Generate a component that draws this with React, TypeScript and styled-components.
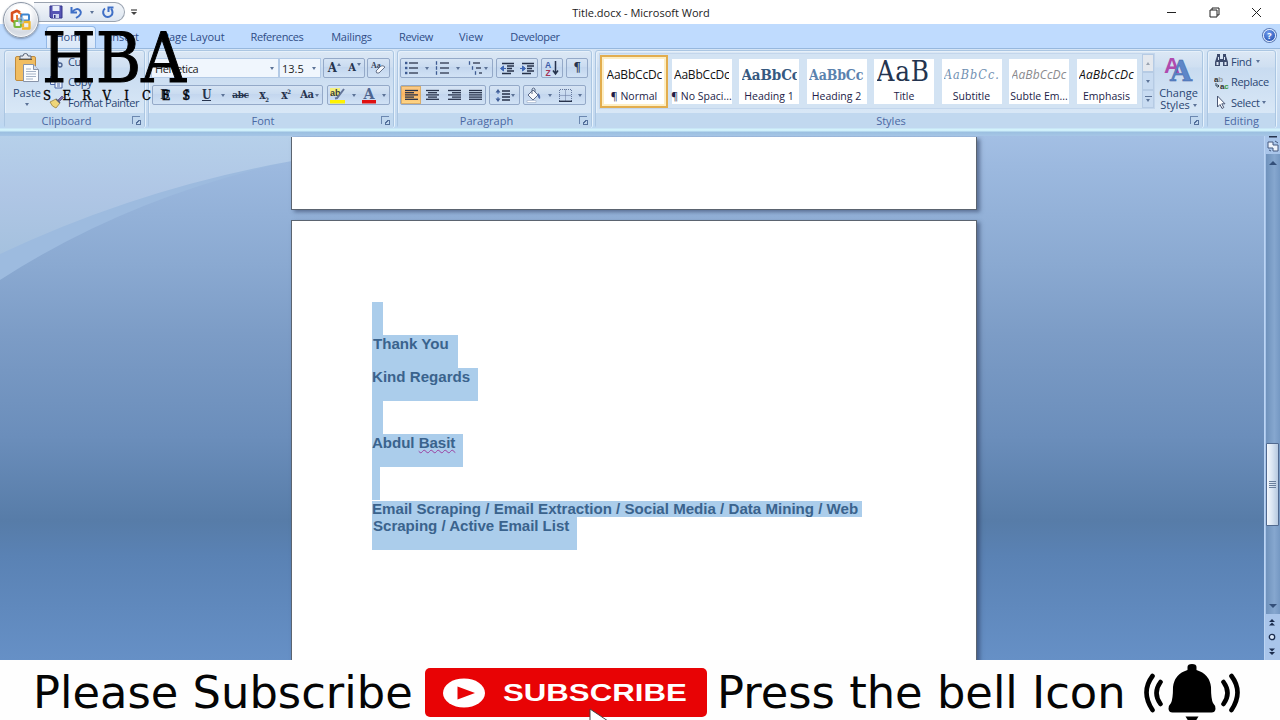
import React from "react";
import styled, { createGlobalStyle, css } from "styled-components";

const Global = createGlobalStyle`
  *{box-sizing:border-box}
  html,body{margin:0;padding:0;background:#fff}
  body{width:1280px;height:720px;overflow:hidden;font-family:"Open Sans","Noto Sans",sans-serif;font-size:11px;color:#2b4673}
  svg{display:block;flex:none}
`;

const Screen = styled.div`position:relative;width:1280px;height:720px;display:flex;flex-direction:column;overflow:hidden;background:#fff;white-space:nowrap;`;

/* ---------- title bar ---------- */
const TitleBar = styled.header`height:24px;display:flex;align-items:center;background:#fff;padding-left:34px;flex:none;`;
const QuickAccess = styled.div`width:91px;height:20px;display:flex;align-items:center;gap:7px;padding-left:15px;border:1px solid #9aa3b0;border-left:0;border-radius:0 10px 10px 0;background:linear-gradient(#f3f6fa,#dce5f0);`;
const QuickMore = styled.div`width:18px;display:flex;justify-content:center;`;
const DocTitle = styled.div`margin-left:428px;width:140px;display:flex;justify-content:center;color:#222;font-size:11px;padding-top:1px;letter-spacing:0;`;
const WindowControls = styled.div`margin-left:455px;display:flex;align-items:center;gap:31.5px;`;
const Orb = styled.div`position:absolute;left:3px;top:2px;width:36px;height:36px;border-radius:50%;border:1px solid #8d97a6;background:radial-gradient(circle at 50% 30%,#fff 0 30%,#d5dae2 65%,#eef1f5 100%);box-shadow:inset 0 0 0 1px #f5f7fa,0 1px 2px rgba(60,80,110,.5);display:flex;align-items:center;justify-content:center;`;

/* ---------- tabs ---------- */
const Tabs = styled.nav`height:24px;display:flex;align-items:center;background:#bfdbfe;padding-left:46px;flex:none;color:#2f4d86;`;
const Tab = styled.div<{ $w: number; $active?: boolean; $ls?: number }>`
  width:${p => p.$w}px;height:24px;display:flex;align-items:center;justify-content:center;padding-top:0;letter-spacing:${p => p.$ls ?? 0}px;
  ${p => p.$active && css`height:22px;align-self:flex-end;padding-bottom:2px;background:linear-gradient(#e8f3fe,#dbe8f8);border:1px solid #93b8e6;border-bottom:0;border-radius:4px 4px 0 0;`}
`;
const Help = styled.div`margin:0 4px 2px auto;width:13px;height:13px;border-radius:50%;background:radial-gradient(circle at 40% 30%,#6f9bee,#1d46a8);border:1px solid #dfeafc;box-shadow:0 0 0 1px #5c7ab4;display:flex;align-items:center;justify-content:center;color:#fff;font-size:9px;font-weight:700;`;

/* ---------- ribbon ---------- */
const Ribbon = styled.section`height:88px;display:flex;gap:3px;padding:1px 3px 6px 4px;flex:none;background:linear-gradient(#d6e5f5 0,#cfe0f3 30%,#c3d8ef 78%,#bdd8f2 79px,#d5f4fb 80px,#cdeefa 82px,#9bbfe0 83px,#a9c8e8 88px);border-top:1px solid #97b8de;`;
const Group = styled.div<{ $w: number; $ml?: number }>`width:${p => p.$w}px;margin-left:${p => p.$ml ?? 0}px;height:78px;display:flex;flex-direction:column;border:1px solid #abc6e2;border-radius:3px;box-shadow:1px 0 0 #e6f2fc,inset 1px 1px 0 #e6f0fa;background:linear-gradient(#dce8f5,#cfdff1 16px,#c8dbf0 17px,#d8e7f6 61px);flex:none;`;
const GroupBody = styled.div`height:62px;display:flex;flex:none;`;
const GroupLabel = styled.div<{ $shift?: number }>`
  flex:1;display:flex;align-items:center;justify-content:center;position:relative;background:#c1d8ef;color:#4a68a3;letter-spacing:0;padding-right:${p => p.$shift ?? 16}px;
`;
const Launcher = styled.span`position:absolute;right:4px;top:3px;width:8px;height:8px;border-left:1px solid #6c88b0;border-top:1px solid #6c88b0;
  &::after{content:"";position:absolute;left:3px;top:3px;width:4px;height:4px;border-right:1.5px solid #55719c;border-bottom:1.5px solid #55719c;background:linear-gradient(135deg,transparent 30%,#55719c 31% 60%,transparent 61%);}
`;
const Caret = styled.i<{ $c?: string; $up?: boolean; $s?: number }>`width:0;height:0;flex:none;border-left:${p => p.$s ?? 2.5}px solid transparent;border-right:${p => p.$s ?? 2.5}px solid transparent;${p => p.$up ? "border-bottom" : "border-top"}:${p => p.$s ?? 3}px solid ${p => p.$c ?? "#5c7397"};`;
const BigButton = styled.div<{ $w: number; $pt?: number; $gap?: number }>`width:${p => p.$w}px;display:flex;flex-direction:column;align-items:center;line-height:12px;padding-top:${p => p.$pt ?? 0}px;gap:${p => p.$gap ?? 0}px;`;
const CaretLine = styled.span`display:flex;align-items:center;gap:3px;`;
const CommandList = styled.div<{ $gap: number; $ls?: number }>`display:flex;flex-direction:column;letter-spacing:${p => p.$ls ?? 0}px;
  &>div{height:20.5px;display:flex;align-items:center;gap:${p => p.$gap}px;}
`;
const Rows = styled.div`display:flex;flex-direction:column;gap:7px;padding:7px 0 0 2px;`;
const Row = styled.div<{ $gap?: number; $pl?: number }>`display:flex;height:20px;gap:${p => p.$gap ?? 3}px;padding-left:${p => p.$pl ?? 0}px;`;
const Combo = styled.div<{ $w: number; $pl?: number; $ls?: number }>`width:${p => p.$w}px;height:20px;background:#f0f6fd;border:1px solid #b3cae6;display:flex;align-items:center;justify-content:space-between;padding:0 4px 0 ${p => p.$pl ?? 3}px;color:#222;letter-spacing:${p => p.$ls ?? 0}px;`;
const ButtonBox = styled.div<{ $w: number }>`width:${p => p.$w}px;height:20px;border:1px solid #94a9c8;border-radius:2px;background:linear-gradient(#d6e4f4,#c9dbf0 45%,#c3d6ee 46%,#d1e2f5);display:flex;align-items:center;color:#26334d;`;
const Cell = styled.div<{ $w: number; $on?: boolean; $top?: boolean }>`width:${p => p.$w}px;height:18px;display:flex;align-items:center;justify-content:center;flex:none;gap:1px;
  ${p => p.$top && css`i{align-self:flex-start;margin-top:4px;}`}
  ${p => p.$on && css`background:linear-gradient(#fbcf8d,#fcb460 45%,#fed98a);box-shadow:inset 0 0 0 1px #d9ad6a;`}
`;
const Glyph = styled.span<{ $size?: number; $italic?: boolean; $u?: boolean; $strike?: boolean }>`font-family:"DejaVu Serif Condensed","DejaVu Serif",serif;font-weight:700;font-size:${p => p.$size ?? 12}px;line-height:14px;font-style:${p => p.$italic ? "italic" : "normal"};text-decoration:${p => p.$u ? "underline" : p.$strike ? "line-through" : "none"};letter-spacing:-.4px;
  sub,sup{font-size:6px;line-height:0;}
`;

/* ---------- style gallery ---------- */
const Gallery = styled.div`margin:2px 0 0 3px;width:556px;height:56px;display:flex;align-items:center;gap:7.5px;padding-left:4px;border:1px solid #c3d6ec;background:#d3e3f3;`;
const StyleTile = styled.div<{ $on?: boolean }>`width:60px;height:45px;background:#fff;display:flex;flex-direction:column;align-items:center;flex:none;color:#221c48;
  ${p => p.$on && css`box-shadow:0 0 0 2px #fdeec4,0 0 0 4px #e2ad4e;`}
`;
const Sample = styled.div<{ $ff?: string; $size?: number; $c?: string; $b?: boolean; $i?: boolean; $ls?: number; $lh?: number }>`
  width:55px;height:29px;line-height:${p => p.$lh ?? 32}px;overflow:hidden;text-align:left;
  font-family:${p => p.$ff ?? '"Open Sans"'},sans-serif;font-size:${p => p.$size ?? 12}px;color:${p => p.$c ?? "#111"};font-weight:${p => p.$b ? 700 : 400};font-style:${p => p.$i ? "italic" : "normal"};letter-spacing:${p => p.$ls ?? 0}px;
`;
const StyleName = styled.div`height:16px;line-height:16px;font-size:10.5px;`;
const GallerySteps = styled.div`width:13px;height:54px;display:flex;flex-direction:column;margin-left:-2px;
  div{flex:1;border:1px solid #b6cbe4;background:#c8dbf1;display:flex;flex-direction:column;gap:2px;align-items:center;justify-content:center;}
  div:first-child{background:#e4e8ee;}
  hr{width:7px;height:1px;border:0;margin:0;background:#5c7397;}
`;

/* ---------- document area ---------- */
const Work = styled.main`height:524px;display:flex;flex:none;`;
const Desk = styled.div`position:relative;width:1264px;height:524px;overflow:hidden;background:linear-gradient(#a3bfe4 0,#9cb9df 30px,#8aa9d1 130px,#7c9cc6 200px,#6b8ebb 300px,#577ca8 385px,#5a82b4 420px,#6690c6 524px);display:flex;flex-direction:column;align-items:center;padding:1px 0 0 4px;gap:10px;`;
const Swoosh = styled.svg`position:absolute;left:0;top:0;`;
const Sheet = styled.article<{ $h: number; $last?: boolean }>`position:relative;width:686px;height:${p => p.$h}px;background:#fff;border:1px solid #5b6470;border-top-width:${p => p.$last ? 1 : 0}px;flex:none;box-shadow:3px 2px 4px rgba(40,55,90,.55);padding:${p => p.$last ? "81px 0 0 80px" : "0"};`;
const Line = styled.p<{ $w: number; $h?: number; $x?: number; $gap?: number; $ls?: number }>`
  margin:${p => p.$gap ?? 0}px 0 0;width:${p => p.$w}px;height:${p => p.$h ?? 33}px;background:#abcdeb;color:#3a638d;
  font:700 15.1px/${p => p.$h ?? 17}px "Liberation Sans",Arial,sans-serif;padding-left:${p => p.$x ?? 0}px;letter-spacing:${p => p.$ls ?? 0}px;
`;
const Misspelled = styled.span`text-decoration:underline wavy #9a3fa0 1px;text-underline-offset:1px;`;
const ScrollColumn = styled.aside`width:16px;height:524px;background:#a9c5ea;display:flex;flex-direction:column;align-items:center;border-left:1px solid #bcd5f4;`;
const Track = styled.div`width:14px;height:460px;margin-top:2px;background:linear-gradient(90deg,#6f92bc,#86a7cf 60%,#7598c3);display:flex;flex-direction:column;align-items:center;padding:7px 0 6px;i:last-child{margin-top:auto}`;
const Thumb = styled.div`width:13px;height:83px;flex:none;margin-top:278px;border:1px solid #50698f;border-radius:1px;background:linear-gradient(90deg,#f3f7fc,#dbe6f3 45%,#b6c9e0);display:flex;flex-direction:column;align-items:center;justify-content:center;gap:1px;
  hr{width:7px;height:1px;margin:0;border:0;background:#6a7f9c;}
`;
const BrowseKeys = styled.div`flex:1;display:flex;flex-direction:column;justify-content:space-around;align-items:center;padding-right:2px;`;

/* ---------- call-to-action strip ---------- */
const Banner = styled.footer`height:60px;display:flex;align-items:center;background:#fefefe;position:relative;flex:none;padding-left:33px;font:44.8px/60px "DejaVu Sans",sans-serif;color:#050505;`;
const BannerText = styled.div<{ $w: number }>`width:${p => p.$w}px;flex:none;height:60px;padding-top:3px;line-height:59px;`;
const RedButton = styled.div`width:282px;height:49px;margin:5px 10px 0 0;border-radius:5px;background:#e80305;display:flex;align-items:center;flex:none;padding-left:18px;`;
const RedLabel = styled.span`margin-left:18px;font:700 24px/49px "Liberation Sans",Arial,sans-serif;color:#fff;transform:scaleX(1.3);transform-origin:0 50%;`;
const Pointer = styled.svg`position:absolute;left:588px;top:48px;`;
const Bell = styled.svg`position:absolute;left:1140px;top:0;`;

/* ---------- overlay logo ---------- */
const Watermark = styled.div`position:absolute;left:42px;top:23px;width:152px;color:#000;font-family:"DejaVu Serif Condensed","DejaVu Serif",serif;`;
const WatermarkName = styled.div`font-size:70px;line-height:70px;-webkit-text-stroke:1px #000;transform:scaleX(.98);transform-origin:0 0;`;
const WatermarkSub = styled.div`display:flex;height:14px;margin-top:-4px;margin-left:-5px;font-size:13px;line-height:14px;
  span{width:19.9px;text-align:center;flex:none;-webkit-text-stroke:.3px #000;}
`;

const Lines = ({ rows, w = 13 }: { rows: [number, number][]; w?: number }) => (
  <svg width={w} height="12" viewBox={`0 0 ${w} 12`}>{rows.map(([x, l], i) => <path key={i} d={`M${x} ${1.5 + i * 2.2}h${l}`} stroke="#27324a" strokeWidth="1.3" />)}</svg>
);
const ListIcon = ({ kind }: { kind: "dot" | "num" | "multi" }) => (
  <svg width="15" height="14" viewBox="0 0 15 14">
    {[2, 7, 12].map((y, i) => {
      const o = kind === "multi" ? i * 3 : 0;
      return <g key={y}><path d={kind === "dot" ? `M1 ${y}h2.4` : `M${1.5 + o} ${y - 1.8}v3.6`} stroke="#3e5c94" strokeWidth={kind === "dot" ? 2.4 : 1.3} /><path d={`M${5 + o} ${y}H${kind === "multi" ? 12 + i : 14}`} stroke="#38435a" strokeWidth="1.4" /></g>;
    })}
  </svg>
);
const IndentIcon = ({ flip }: { flip?: boolean }) => (
  <svg width="15" height="13" viewBox="0 0 15 13"><path d="M2 1.5h12M7 4h7M7 6.5h5M7 9h7M2 11.5h9" stroke="#27324a" strokeWidth="1.4" /><path d={flip ? "M0 6.5h3M2.5 4L5.5 6.5 2.5 9z" : "M6 6.5H3M3.500 4L.5 6.500 3.500 9z"} stroke="#3f67b5" fill="#3f67b5" /></svg>
);
const OfficeLogo = () => (
  <svg width="24" height="24" viewBox="0 0 24 24" fill="none" strokeWidth="2.6" strokeLinejoin="round">
    <path d="M11 4.500 8 2.800 3 5v7.500l3 1.800" stroke="#d8501f" /><path d="M8 7v4h4V6L9.500 4.500" stroke="#e8732a" strokeWidth="1.8" />
    <rect x="12.500" y="6.500" width="7.500" height="6" rx="1" stroke="#3f86cf" strokeWidth="2" />
    <rect x="5.500" y="13" width="6.500" height="6" rx="1" stroke="#7bb83c" strokeWidth="2.200" />
    <path d="M13 20.500h7.500V14H14v5" stroke="#f1b629" strokeWidth="2.300" /><path d="M10 10h4v5h-4z" stroke="#9cc6e8" strokeWidth="1.200" />
  </svg>
);
const PasteIcon = () => (
  <svg width="26" height="30" viewBox="0 0 26 30">
    <rect x="1.500" y="3.500" width="20" height="24" rx="1.500" fill="#f0bd62" stroke="#c08b3d" />
    <path d="M6 6V3h3q0-2.500 2.500-2.500T14 3h3v3z" fill="#e7e9ee" stroke="#596579" /><path d="M5 6.500h13" stroke="#6a5533" />
    <path d="M9.500 11.500h10l5 5v12h-15z" fill="#fbfdff" stroke="#8793a8" /><path d="M19.500 11.500v5h5" fill="#d3dded" stroke="#8793a8" />
    <path d="M12 16h5M12 18.500h10M12 21h10M12 23.500h10M12 26h7" stroke="#9aa9c0" strokeWidth=".9" />
  </svg>
);
const CutIcon = () => <svg width="15" height="14" viewBox="0 0 15 14" fill="none" stroke="#4a618f" strokeWidth="1.300"><path d="M5 1l5 8M11 1L6 9" /><circle cx="5" cy="11" r="2" /><circle cx="11" cy="11" r="2" /></svg>;
const CopyIcon = () => <svg width="15" height="14" viewBox="0 0 15 14" fill="#eef4fd" stroke="#4d67a6"><path d="M1.500 1.500h5l2 2v6h-7z" /><path d="M6 5h5l2 2v6H6z" /><path d="M8 9h3M8 11h3" /></svg>;
const BrushIcon = () => <svg width="15" height="14" viewBox="0 0 15 14"><path d="M9 5l4-4 1.500 1.500-4 4z" fill="#7e6dad" stroke="#4a4a78" strokeWidth=".7" /><path d="M1 7l6-3 4 4-4 5q-4-1-6-6z" fill="#efd679" stroke="#99813f" strokeWidth=".8" /><path d="M7 4l4 4" stroke="#5a6072" strokeWidth="1.500" /></svg>;

const samples: { name: string; text: string; p?: object }[] = [
  { name: "¶ Normal", text: "AaBbCcDc", p: { $ls: -0.2 } },
  { name: "¶ No Spaci...", text: "AaBbCcDc", p: { $ls: -0.2 } },
  { name: "Heading 1", text: "AaBbCc", p: { $ff: '"DejaVu Serif Condensed"', $b: true, $size: 15, $c: "#365980", $ls: -0.1 } },
  { name: "Heading 2", text: "AaBbCc", p: { $ff: '"DejaVu Serif Condensed"', $b: true, $size: 14, $c: "#5b82ae", $ls: -0.15 } },
  { name: "Title", text: "AaB", p: { $ff: '"DejaVu Serif Condensed"', $size: 27.5, $c: "#24344f", $ls: 0.8, $lh: 24 } },
  { name: "Subtitle", text: "AaBbCc.", p: { $ff: '"DejaVu Serif Condensed"', $i: true, $size: 12.5, $c: "#7190b2", $ls: 1 } },
  { name: "Subtle Em...", text: "AaBbCcDc", p: { $i: true, $c: "#8a8a8e", $ls: 0.15 } },
  { name: "Emphasis", text: "AaBbCcDc", p: { $i: true, $ls: 0.15 } },
];

export default function App() {
  return (
    <Screen>
      <Global />
      <TitleBar>
        <QuickAccess>
          <svg width="14" height="14" viewBox="0 0 14 14"><path d="M1 1h12v12H2l-1-1z" fill="#5655b4" stroke="#34348a" /><path d="M3.500 1h7v5h-7z" fill="#e9effb" /><path d="M4 9h6v4H4z" fill="#cdd6ee" /><path d="M5 10h1.500v3H5z" fill="#34348a" /></svg>
          <svg width="13" height="13" viewBox="0 0 13 13" fill="none" stroke="#3f6fc6" strokeWidth="2"><path d="M2 6q5-5 8-1.500T6 12" /><path d="M1.500 1v5.500H7" /></svg>
          <Caret />
          <svg width="14" height="13" viewBox="0 0 14 13" fill="none" stroke="#3f6fc6" strokeWidth="2"><path d="M4 2.500a4.700 4.700 0 1 0 6 .3" /><path d="M7.500 6V1.500h5" /></svg>
        </QuickAccess>
        <QuickMore><svg width="6" height="7" viewBox="0 0 6 7"><path d="M0 1h6" stroke="#444" strokeWidth="1.200" /><path d="M0 3h6L3 6z" fill="#444" /></svg></QuickMore>
        <DocTitle>Title.docx - Microsoft Word</DocTitle>
        <WindowControls>
          <svg width="11" height="11" viewBox="0 0 11 11"><path d="M1 5.500h9" stroke="#222" /></svg>
          <svg width="11" height="11" viewBox="0 0 11 11" fill="none" stroke="#222"><path d="M1 3h7v7H1z" /><path d="M3 3V1h7v7H8" /></svg>
          <svg width="11" height="11" viewBox="0 0 11 11"><path d="M1 1l9 9M10 1l-9 9" stroke="#222" /></svg>
        </WindowControls>
      </TitleBar>

      <Tabs>
        <Tab $w={50} $active>Home</Tab>
        <Tab $w={56}>Insert</Tab>
        <Tab $w={83}>Page Layout</Tab>
        <Tab $w={84} $ls={-0.4}>References</Tab>
        <Tab $w={65} $ls={-0.2}>Mailings</Tab>
        <Tab $w={64} $ls={-0.3}>Review</Tab>
        <Tab $w={46}>View</Tab>
        <Tab $w={82} $ls={-0.35}>Developer</Tab>
        <Help>?</Help>
      </Tabs>

      <Ribbon>
        <Group $w={141}>
          <GroupBody>
            <BigButton $w={44} $pt={2} $gap={4}>
              <PasteIcon />
              <span>Paste</span><Caret />
            </BigButton>
            <CommandList $gap={4} $ls={-0.4}>
              <div><CutIcon />Cut</div>
              <div><CopyIcon />Copy</div>
              <div><BrushIcon />Format Painter</div>
            </CommandList>
          </GroupBody>
          <GroupLabel>Clipboard<Launcher /></GroupLabel>
        </Group>

        <Group $w={246}>
          <GroupBody>
            <Rows>
              <Row $gap={2}>
                <Row $gap={0}>
                  <Combo $w={128} $pl={3} $ls={-0.4}>Helvetica<Caret /></Combo>
                  <Combo $w={42} $pl={2}>13.5<Caret /></Combo>
                </Row>
                <ButtonBox $w={42}>
                  <Cell $w={21} $top><Glyph $size={13}>A</Glyph><Caret $up /></Cell>
                  <Cell $w={19} $top><Glyph $size={11}>A</Glyph><Caret /></Cell>
                </ButtonBox>
                <ButtonBox $w={23}>
                  <Cell $w={21}><svg width="17" height="16" viewBox="0 0 17 16"><text x="1" y="8" fontSize="8" fontFamily="Liberation Serif" fontWeight="700" fill="#34415c">Aa</text><path d="M6 11l5-5q2-1 4 1l-6 6q-3 1-3-2z" fill="#f6f8fc" stroke="#68758d" /></svg></Cell>
                </ButtonBox>
              </Row>
              <Row $pl={1} $gap={4}>
                <ButtonBox $w={171}>
                  <Cell $w={23}><Glyph>B</Glyph></Cell>
                  <Cell $w={20}><Glyph $italic>I</Glyph></Cell>
                  <Cell $w={21}><Glyph $u>U</Glyph></Cell>
                  <Cell $w={11}><Caret /></Cell>
                  <Cell $w={25}><Glyph $size={10} $strike>abc</Glyph></Cell>
                  <Cell $w={22}><Glyph>x<sub>2</sub></Glyph></Cell>
                  <Cell $w={22}><Glyph>x<sup>2</sup></Glyph></Cell>
                  <Cell $w={25}><Glyph $size={11}>Aa</Glyph><Caret /></Cell>
                </ButtonBox>
                <ButtonBox $w={63}>
                  <Cell $w={20}><svg width="16" height="17" viewBox="0 0 16 17"><path d="M0 1h10v8H0z" fill="#f5f07a" /><text x="0" y="9" fontSize="9" fontFamily="Liberation Sans" fontWeight="700" fill="#333a44">ab</text><path d="M14 2L7 11l-2 .5" stroke="#64759a" strokeWidth="2" fill="none" /><path d="M0 13h15v3.500H0z" fill="#fff200" /></svg></Cell>
                  <Cell $w={11}><Caret /></Cell>
                  <Cell $w={20}><svg width="16" height="17" viewBox="0 0 16 17"><text x="2.500" y="11.500" fontSize="14" fontFamily="DejaVu Serif" fontWeight="700" fill="#4e6590" textLength="11" lengthAdjust="spacingAndGlyphs">A</text><path d="M1 13h14v3.500H1z" fill="#e01010" /></svg></Cell>
                  <Cell $w={10}><Caret /></Cell>
                </ButtonBox>
              </Row>
            </Rows>
          </GroupBody>
          <GroupLabel>Font<Launcher /></GroupLabel>
        </Group>

        <Group $w={195}>
          <GroupBody>
            <Rows>
              <Row>
                <ButtonBox $w={93}>
                  <Cell $w={20}><ListIcon kind="dot" /></Cell><Cell $w={11}><Caret /></Cell>
                  <Cell $w={20}><ListIcon kind="num" /></Cell><Cell $w={11}><Caret /></Cell>
                  <Cell $w={29}><ListIcon kind="multi" /><Caret /></Cell>
                </ButtonBox>
                <ButtonBox $w={42}><Cell $w={20}><IndentIcon /></Cell><Cell $w={20}><IndentIcon flip /></Cell></ButtonBox>
                <ButtonBox $w={22}><Cell $w={20}><svg width="16" height="16" viewBox="0 0 16 16"><text x="1" y="7.500" fontSize="8.500" fontFamily="Liberation Sans" fontWeight="700" fill="#3d5da8">A</text><text x="1.500" y="15.500" fontSize="8.500" fontFamily="Liberation Sans" fontWeight="700" fill="#a33458">Z</text><path d="M11.500 1v12M9 10.500l2.500 3.500 2.500-3.500" stroke="#26334d" strokeWidth="1.500" fill="none" /></svg></Cell></ButtonBox>
                <ButtonBox $w={22}><Cell $w={20}><Glyph $size={13}>¶</Glyph></Cell></ButtonBox>
              </Row>
              <Row>
                <ButtonBox $w={86}>
                  <Cell $w={20} $on><Lines rows={[[0, 13], [0, 9], [0, 13], [0, 9], [0, 13]]} /></Cell>
                  <Cell $w={23}><Lines rows={[[0, 13], [2, 9], [0, 13], [2, 9], [0, 13]]} /></Cell>
                  <Cell $w={21}><Lines rows={[[0, 13], [4, 9], [0, 13], [4, 9], [0, 13]]} /></Cell>
                  <Cell $w={20}><Lines rows={[[0, 13], [0, 13], [0, 13], [0, 13], [0, 13]]} /></Cell>
                </ButtonBox>
                <ButtonBox $w={31}>
                  <Cell $w={29}><svg width="15" height="15" viewBox="0 0 15 15"><path d="M3 3v9" stroke="#3f67b5" strokeDasharray="3 3" /><path d="M.5 4.500L3 1l2.500 3.500zM.5 10.500L3 14l2.500-3.500z" fill="#3f5c96" /><path d="M7 3h8M7 6h8M7 9h8M7 12h8" stroke="#27324a" strokeWidth="1.300" /></svg><Caret /></Cell>
                </ButtonBox>
                <ButtonBox $w={63}>
                  <Cell $w={20}><svg width="16" height="16" viewBox="0 0 16 16"><path d="M2 8l5-5 5 5-5 5z" fill="#f7f9fc" stroke="#5b6a86" /><path d="M6 7V2q1.500-2 3 0v3" stroke="#5b6a86" fill="none" /><path d="M12 6q3 2 2 6-3-1-2-6z" fill="#4d6cab" /><path d="M1 13.500h9v2H1z" fill="#fff" stroke="#9cabc4" strokeWidth=".6" /></svg></Cell>
                  <Cell $w={11}><Caret /></Cell>
                  <Cell $w={20}><svg width="13" height="13" viewBox="0 0 13 13"><path d="M.5 12V.5h12V12M6.500.5V12M.5 6.500h12" fill="none" stroke="#64779c" strokeDasharray="1 1" /><path d="M0 12.300h13" stroke="#27324a" strokeWidth="1.400" /></svg></Cell>
                  <Cell $w={10}><Caret /></Cell>
                </ButtonBox>
              </Row>
            </Rows>
          </GroupBody>
          <GroupLabel>Paragraph<Launcher /></GroupLabel>
        </Group>

        <Group $w={608}>
          <GroupBody>
            <Gallery>
              {samples.map((s, i) => (
                <StyleTile key={s.name} $on={i === 0}><Sample {...s.p}>{s.text}</Sample><StyleName>{s.name}</StyleName></StyleTile>
              ))}
              <GallerySteps><div><Caret $up $c="#9aa3b0" /></div><div><Caret /></div><div><hr /><Caret /></div></GallerySteps>
            </Gallery>
            <BigButton $w={47} $pt={3}>
              <svg width="32" height="33" viewBox="0 0 32 33">
                <text x="1" y="19" fontFamily="Liberation Sans" fontSize="22" fontWeight="700" fill="#b04aae">A</text>
                <text x="7" y="27" fontFamily="DejaVu Serif Condensed" fontSize="27" fontWeight="700" fill="#5d86c8" stroke="#3c62a4" strokeWidth=".4" textLength="22" lengthAdjust="spacingAndGlyphs">A</text>
              </svg>
              <span>Change</span><CaretLine>Styles<Caret /></CaretLine>
            </BigButton>
          </GroupBody>
          <GroupLabel>Styles<Launcher /></GroupLabel>
        </Group>

        <Group $w={69} $ml={1}>
          <GroupBody>
            <Cell $w={6} />
            <CommandList $gap={2} $ls={-0.3}>
              <div><svg width="15" height="14" viewBox="0 0 15 14"><path d="M1 8l2-6h3v10H1zM14 8l-2-6H9v10h5z" fill="#3d4b6d" /><path d="M6 5h3v3H6zM3 0h3v2H3zM9 0h3v2H9z" fill="#3d4b6d" /><path d="M2.500 8h2v3h-2zM10.500 8h2v3h-2zM4 3h1v3H4zM10 3h1v3h-1z" fill="#dbe5f4" /></svg>Find<Cell $w={9}><Caret /></Cell></div>
              <div><svg width="15" height="14" viewBox="0 0 15 14"><text x="0" y="7" fontSize="8" fontWeight="700" fontFamily="Liberation Sans" fill="#333">a<tspan fill="#999">b</tspan></text><text x="6" y="13.500" fontSize="8" fontWeight="700" fontFamily="Liberation Sans" fill="#333">a<tspan fill="#3a9a3a">c</tspan></text><path d="M2 8v3h3M3.500 9.500L5 11l-1.500 1.500" stroke="#345" fill="none" /></svg>Replace</div>
              <div><svg width="15" height="14" viewBox="0 0 15 14"><path d="M3.500 1v11l2.500-2.500 2 4 1.800-1-2-3.700H11z" fill="#fff" stroke="#4b5875" /></svg>Select<Caret /></div>
            </CommandList>
          </GroupBody>
          <GroupLabel $shift={0}>Editing</GroupLabel>
        </Group>
      </Ribbon>

      <Work>
        <Desk>
          <Swoosh width="292" height="150" viewBox="0 0 292 150">
            <defs><linearGradient id="sw" x1="0" y1="0" x2="0" y2="1"><stop offset="0" stopColor="#b6d0ea" /><stop offset=".5" stopColor="#afc6e5" /><stop offset="1" stopColor="#a5c1de" /></linearGradient></defs>
            <path d="M0 0H292V25Q130 60 0 144Z" fill="#9dbbdf" />
            <path d="M0 0H292V25Q140 52 0 118Z" fill="url(#sw)" />
          </Swoosh>
          <Sheet $h={73} />
          <Sheet $h={450} $last>
            <Line $w={11} />
            <LineText $w={86} $x={1}>Thank You</LineText>
            <LineText $w={106}>Kind Regards</LineText>
            <Line $w={11} />
            <LineText $w={91} $ls={-0.05}>Abdul <Misspelled>Basit</Misspelled></LineText>
            <Line $w={8} />
            <Line $w={490} $h={16} $gap={1}>Email Scraping / Email Extraction / Social Media / Data Mining / Web</Line>
            <LineText $w={205} $x={1} $ls={-0.04}>Scraping / Active Email List</LineText>
          </Sheet>
        </Desk>
        <ScrollColumn>
          <svg width="14" height="16" viewBox="0 0 14 16"><path d="M3 .5h8" stroke="#26334d" strokeWidth="2" /><path d="M2 6h5v3h5v6H7v-3H2z" fill="#eef3fb" stroke="#44587e" /><path d="M9 5l3 2M3 14l2 1" stroke="#44587e" /></svg>
          <Track>
            <Caret $up $c="#34507a" $s={4} />
            <Thumb><hr /><hr /><hr /><hr /></Thumb>
            <Caret $c="#34507a" $s={4} />
          </Track>
          <BrowseKeys>
            <svg width="8" height="8" viewBox="0 0 8 8"><path d="M1 4l3-3 3 3zM1 7.500l3-3 3 3z" fill="#1b2c4d" /></svg>
            <svg width="8" height="8" viewBox="0 0 8 8"><circle cx="4" cy="4" r="2.700" fill="#dbe8fa" stroke="#1b2c4d" strokeWidth="1.300" /></svg>
            <svg width="8" height="8" viewBox="0 0 8 8"><path d="M1 .5l3 3 3-3zM1 4l3 3 3-3z" fill="#1b2c4d" /></svg>
          </BrowseKeys>
        </ScrollColumn>
      </Work>

      <Banner>
        <BannerText $w={392}>Please Subscribe</BannerText>
        <RedButton>
          <svg width="42" height="30" viewBox="0 0 42 30"><ellipse cx="21" cy="15" rx="21" ry="14.500" fill="#fff" /><path d="M14.500 8.500L32 15l-17.500 6.500z" fill="#e80305" /></svg>
          <RedLabel>SUBSCRIBE</RedLabel>
        </RedButton>
        <BannerText $w={420}>Press the bell Icon</BannerText>
        <Pointer width="22" height="12" viewBox="0 0 22 12"><path d="M2 1v14L20 13z" fill="#fff" stroke="#444" /></Pointer>
        <Bell width="104" height="60" viewBox="0 0 104 60">
          <path d="M47.500 9V6q0-3 4.500-3t4.500 3v3q13 4 14.500 17 0 12 2 16 3 3 2.500 6-.5 3.500-4 3.500h-39q-3.500 0-4-3.500-.5-3 2.500-6 2-4 2-16 1.500-13 14.500-17z" fill="#000" transform="translate(0 1)" />
          <path d="M45.500 56.500h13l-2.500 4h-8z" fill="#000" />
          <path d="M12.500 16q-12 16 0 34M20.500 22q-8 11 0 22M91.500 16q12 16 0 34M83.500 22q8 11 0 22" fill="none" stroke="#000" strokeWidth="4.600" strokeLinecap="round" />
        </Bell>
      </Banner>

      <Orb><OfficeLogo /></Orb>
      <Watermark>
        <WatermarkName>HBA</WatermarkName>
        <WatermarkSub>{"SERVICES".split("").map((c, i) => <span key={i}>{c}</span>)}</WatermarkSub>
      </Watermark>
    </Screen>
  );
}

const LineText = styled(Line)`line-height:17px;`;
